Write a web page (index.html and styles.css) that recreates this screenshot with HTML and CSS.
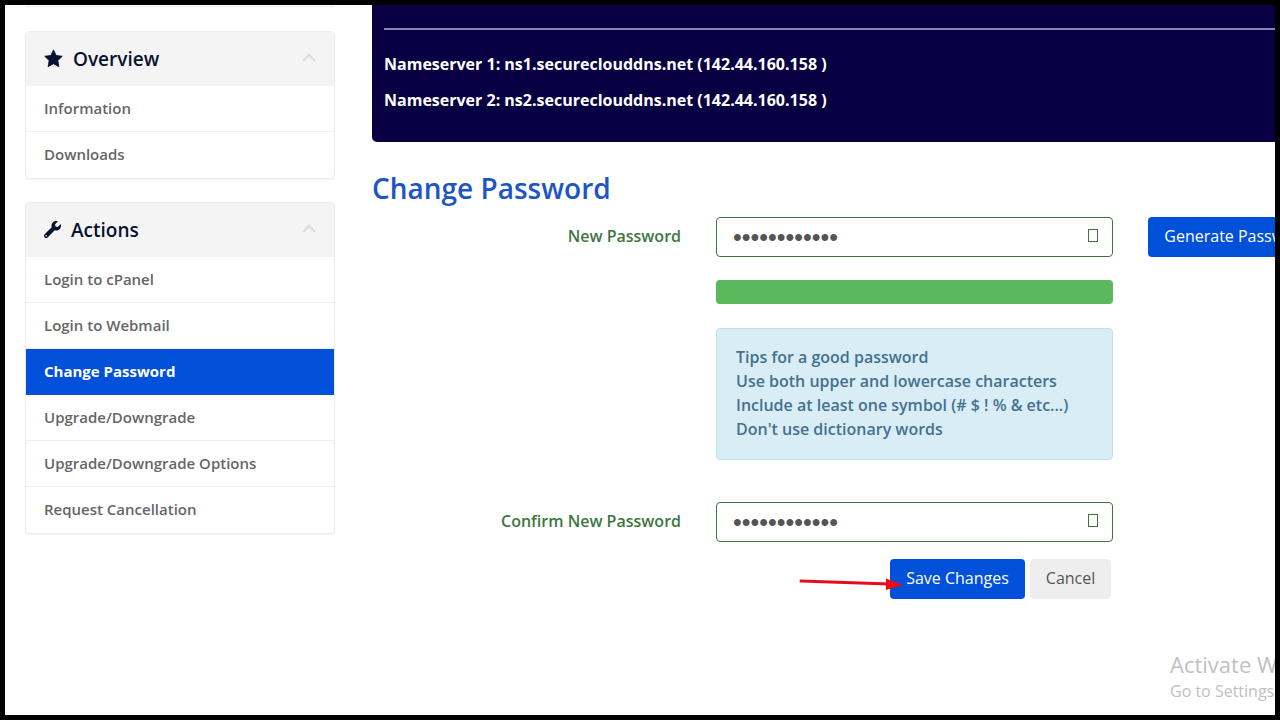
FILE: index.html
```html
<!DOCTYPE html>
<html lang="en">
<head>
    <meta charset="UTF-8">
    <title>Change Password</title>
    <meta name="viewport" content="width=device-width, initial-scale=1">
    <link rel="stylesheet" href="styles.css">
</head>
<body>
    <div class="page">
        <aside class="sidebar">
            <div class="panel-end"></div>
            <section class="panel">
                <h3 class="panel-heading">
                    <svg class="icon" viewBox="0 0 18 18"><path d="M9 .8l2.500 5.300 5.800.8-4.200 4 1 5.800L9 14l-5.100 2.700 1-5.800-4.200-4 5.800-.8z" fill="currentColor" stroke="currentColor" stroke-width=".8" stroke-linejoin="round"/></svg>
                    <span>Overview</span>
                    <svg class="chevron" viewBox="0 0 16 10"><path d="M2 8l6-6 6 6" fill="none" stroke="currentColor" stroke-width="2.4"/></svg>
                </h3>
                <nav class="list">
                    <a class="list-item" href="#information">Information</a>
                    <a class="list-item" href="#downloads">Downloads</a>
                </nav>
            </section>
            <section class="panel">
                <h3 class="panel-heading">
                    <svg class="icon icon-wrench" viewBox="0 0 512 512"><path d="M507.7 109.1c-2.200-9-13.500-12.100-20.100-5.500l-74.400 74.400-67.900-11.300L334 98.900l74.400-74.400c6.600-6.600 3.400-17.900-5.700-20.200-47.400-11.700-99.600.9-136.600 37.900-39.600 39.600-50.500 97.100-34.100 147.200L18.700 402.800c-25 25-25 65.500 0 90.500s65.500 25 90.500 0l213.200-213.200c50.100 16.700 107.500 5.700 147.400-34.200 37.100-37.100 49.700-89.300 37.900-136.800zM64 472c-13.200 0-24-10.700-24-24s10.700-24 24-24 24 10.700 24 24-10.700 24-24 24z" fill="currentColor"/></svg>
                    <span>Actions</span>
                    <svg class="chevron" viewBox="0 0 16 10"><path d="M2 8l6-6 6 6" fill="none" stroke="currentColor" stroke-width="2.4"/></svg>
                </h3>
                <nav class="list">
                    <a class="list-item" href="#cpanel">Login to cPanel</a>
                    <a class="list-item" href="#webmail">Login to Webmail</a>
                    <a class="list-item active" href="#password">Change Password</a>
                    <a class="list-item" href="#upgrade">Upgrade/Downgrade</a>
                    <a class="list-item" href="#options">Upgrade/Downgrade Options</a>
                    <a class="list-item" href="#cancellation">Request Cancellation</a>
                </nav>
            </section>
        </aside>

        <main class="main">
            <div class="server-info">
                <hr>
                <p>Nameserver 1: ns1.secureclouddns.net (142.44.160.158 )</p>
                <p>Nameserver 2: ns2.secureclouddns.net (142.44.160.158 )</p>
            </div>
            <h2>Change Password</h2>
            <form>
                <div class="form-group">
                    <label for="newPassword">New Password</label>
                    <div class="field">
                        <input type="password" id="newPassword" value="abcdefghij12">
                        <svg class="feedback" viewBox="0 0 10 13"><rect x=".5" y=".5" width="9" height="12" fill="none" stroke="currentColor"/></svg>
                    </div>
                    <button type="button" class="btn btn-primary">Generate Password</button>
                    <div class="strength"></div>
                    <div class="tips">
                        Tips for a good password<br>
                        Use both upper and lowercase characters<br>
                        Include at least one symbol (# $ ! % &amp; etc...)<br>
                        Don't use dictionary words
                    </div>
                </div>
                <div class="form-group">
                    <label for="confirmPassword">Confirm New Password</label>
                    <div class="field">
                        <input type="password" id="confirmPassword" value="abcdefghij12">
                        <svg class="feedback" viewBox="0 0 10 13"><rect x=".5" y=".5" width="9" height="12" fill="none" stroke="currentColor"/></svg>
                    </div>
                    <div class="buttons">
                        <div class="save">
                            <button type="submit" class="btn btn-primary">Save Changes</button>
                            <svg class="pointer" viewBox="0 0 106 14"><path d="M2 4l88 3" stroke="#e80c18" stroke-width="3" stroke-linecap="round"/><path d="M87 1.500L104 8l-17 5z" fill="#f00b12"/></svg>
                        </div>
                        <button type="reset" class="btn btn-default">Cancel</button>
                    </div>
                </div>
            </form>
        </main>
    </div>

    <div class="watermark">
        <div class="watermark-title">Activate Windows</div>
        <div class="watermark-text">Go to Settings to activate Windows.</div>
    </div>
</body>
</html>
```
FILE: styles.css
```css
* {
    box-sizing: border-box;
}
html {
    overflow: hidden;
}
body {
    margin: 0;
    height: 100vh;
    border: 5px solid #000;
    overflow: hidden;
    position: relative;
    background: #fff;
    color: #5c5c5c;
    font-family: "Open Sans", "Noto Sans", sans-serif;
    font-size: 16px;
}
.page {
    display: grid;
    grid-template-columns: 310px 1fr;
    gap: 36px;
    width: calc(100% + 94px);
    padding-left: 20px;
}
.panel-end {
    height: 2px;
    margin-bottom: 24px;
    border-bottom: 1px solid #ededed;
}
.panel {
    margin-bottom: 23px;
    border: 1px solid #ececec;
    border-radius: 4px;
    box-shadow: 0 1px 1px rgba(0,0,0,0.05);
}
.panel-heading {
    display: flex;
    align-items: center;
    gap: 10px;
    height: 54px;
    margin: 0;
    padding: 0 17px 1px 18px;
    background: #f4f4f4;
    color: #071230;
    font-size: 19px;
    font-weight: 600;
}
.icon {
    width: 19px;
    height: 19px;
}
.icon-wrench {
    width: 17px;
    height: 17px;
}
.chevron {
    width: 16px;
    height: 10px;
    margin: 0 0 2px auto;
    color: #dcdcdc;
}
.list-item {
    display: block;
    height: 46px;
    padding: 0 18px;
    border-bottom: 1px solid #efefef;
    color: #666;
    font-size: 15px;
    font-weight: 600;
    line-height: 44px;
    text-decoration: none;
}
.list-item:last-child {
    border-bottom: none;
}
.list-item.active {
    background: #0150da;
    border-color: #0150da;
    color: #fff;
    font-weight: 700;
}
.main {
    min-width: 0;
    padding-left: 1px;
}
.server-info {
    padding: 23px 12px 24px;
    background: #080043;
    border-radius: 0 0 5px 5px;
    color: #fff;
    font-weight: 700;
}
.server-info hr {
    height: 2px;
    margin: 0 0 16px;
    border: none;
    background: #8883b5;
}
.server-info p {
    margin: 0;
    line-height: 36px;
}
h2 {
    margin: 28px 0 11px;
    color: #1d55c5;
    font-size: 28px;
    font-weight: 600;
    line-height: 36px;
}
.form-group {
    display: grid;
    grid-template-columns: 7fr 9fr 5fr;
    column-gap: 35px;
    align-items: start;
    margin-bottom: 42px;
}
label {
    color: #3f763f;
    font-weight: 600;
    line-height: 38px;
    text-align: right;
}
.field {
    position: relative;
}
input {
    display: block;
    width: 100%;
    height: 40px;
    padding: 0 16px;
    border: 1px solid #3c763d;
    border-radius: 4px;
    background: #fff;
    color: #555;
    font-family: "Liberation Sans", sans-serif;
    font-size: 25px;
}
.feedback {
    position: absolute;
    top: 12px;
    right: 15px;
    width: 10px;
    height: 13px;
    color: #3c763d;
}
.btn {
    height: 40px;
    padding: 0 16px 2px;
    border: none;
    border-radius: 4px;
    font-family: inherit;
    font-size: 16px;
    justify-self: start;
    white-space: nowrap;
}
.btn-primary {
    background: #0150da;
    color: #fff;
}
.btn-default {
    background: #eee;
    color: #555;
}
.strength {
    grid-column: 2;
    height: 24px;
    margin-top: 23px;
    border-radius: 4px;
    background: #5cb85c;
}
.tips {
    grid-column: 2;
    margin-top: 24px;
    padding: 16px 19px 18px;
    border: 1px solid #bce3ec;
    border-radius: 4px;
    background: #d9edf7;
    color: #44718d;
    font-weight: 600;
    line-height: 24px;
}
.buttons {
    grid-column: 2;
    display: flex;
    justify-content: flex-end;
    gap: 5px;
    margin-top: 17px;
    padding-right: 2px;
}
.save {
    position: relative;
}
.pointer {
    position: absolute;
    top: 18px;
    right: calc(100% - 15px);
    width: 106px;
    height: 14px;
}
.watermark {
    position: absolute;
    bottom: 12px;
    left: calc(100% - 105px);
    color: #c0c0c0;
    white-space: nowrap;
}
.watermark-title {
    font-size: 22px;
    line-height: 29px;
}
.watermark-text {
    font-size: 16px;
    line-height: 24px;
}
```
